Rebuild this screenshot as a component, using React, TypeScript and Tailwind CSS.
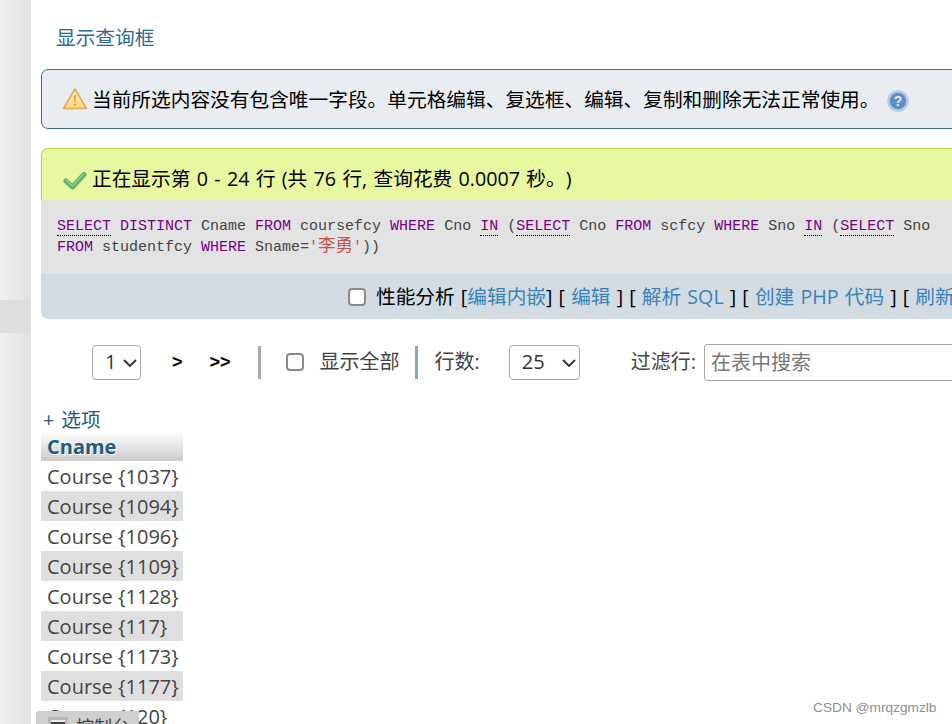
import React from 'react'

const sans = "font-['Open_Sans','Noto_Sans_CJK_SC',sans-serif]"

const rows = ['1037', '1094', '1096', '1109', '1128', '117', '1173', '1177', '120']

const Kw = ({ children, tip }: { children: React.ReactNode; tip?: boolean }) => (
  <span className={tip ? 'text-[#770088] border-b border-dotted border-black' : 'text-[#770088]'}>{children}</span>
)

const WarnIcon = () => (
  <svg width="26" height="24" viewBox="0 0 26 24" className="shrink-0">
    <defs>
      <linearGradient id="warn" x1="0" y1="0" x2="0" y2="1">
        <stop offset="0" stopColor="#fff6d0" />
        <stop offset="1" stopColor="#f7d774" />
      </linearGradient>
    </defs>
    <path d="M13 2 L24.5 21.5 H1.5 Z" fill="url(#warn)" stroke="#e5a95a" strokeWidth="1.6" strokeLinejoin="round" />
    <path d="M12 8 h2 l-.4 7 h-1.2 Z" fill="#d9a520" />
    <circle cx="13" cy="17.6" r="1.2" fill="#d9a520" />
  </svg>
)

const CheckIcon = () => (
  <svg width="24" height="20" viewBox="0 0 24 20" className="shrink-0">
    <path d="M3 11 L9.5 17 L21 4.5" fill="none" stroke="#5fb36a" strokeWidth="5" strokeLinejoin="round" strokeLinecap="round" />
    <path d="M3.5 10.5 L9.5 16 L20.5 4" fill="none" stroke="#8fd08f" strokeWidth="1.4" strokeLinecap="round" />
  </svg>
)

const HelpIcon = () => (
  <svg width="22" height="22" viewBox="0 0 22 22" className="block">
    <circle cx="11" cy="11" r="10.8" fill="#b4cbe6" />
    <circle cx="11" cy="11" r="8.2" fill="#5f8fc4" />
    <text x="11" y="15.8" textAnchor="middle" fontSize="14" fontWeight="700" fontFamily="Liberation Sans" fill="#dfeaf6">?</text>
  </svg>
)

const Check = () => (
  <input type="checkbox" className="block appearance-none w-[18px] h-[18px] shrink-0 bg-white border-2 border-[#8a8a8a] rounded-[4px]" />
)

const Link = ({ children }: { children: React.ReactNode }) => <span className="text-[#3a83b5]">{children}</span>

const Select = ({ value, width, pad }: { value: string; width: string; pad: string }) => (
  <div className={`relative h-[35px] ${width}`}>
    <select className={`appearance-none w-full h-full ${pad} bg-white border border-[#aaa] rounded-[4px] text-[#333]`}>
      <option>{value}</option>
    </select>
    <svg width="14" height="8" viewBox="0 0 14 8" className="absolute right-[4px] top-[14px]">
      <path d="M1 1 L7 7 L13 1" fill="none" stroke="#333" strokeWidth="1.9" />
    </svg>
  </div>
)

export default function App() {
  return (
    <div className={`relative flex w-[952px] h-[724px] overflow-hidden bg-white ${sans}`}>
      <div className="w-[31px] shrink-0 bg-gradient-to-r from-[#eef0f2] to-[#dfe1e3] pt-[300px]">
        <div className="h-[33px] bg-[#dedede]" />
      </div>

      <div className="flex-1 min-w-0 pl-[10px]">
        <div className="pt-[24px] pl-[15px] h-[69px] text-[19.7px] leading-[28px] text-[#2c6a94]">显示查询框</div>

        <div className="w-[1000px] h-[60px] flex items-center pl-[20px] bg-[#e9edf1] border border-[#3f6f86] rounded-[7px] text-[19.7px] text-black whitespace-nowrap">
          <WarnIcon />
          <span className="ml-[4px] pt-[1px]">当前所选内容没有包含唯一字段。单元格编辑、复选框、编辑、复制和删除无法正常使用。</span>
          <span className="ml-[7px] mt-[4px]"><HelpIcon /></span>
        </div>

        <div className="w-[1000px] mt-[19px] rounded-[7px] overflow-hidden">
          <div className="h-[52px] flex items-center pl-[21px] bg-[#e8f8a0] border border-b-0 border-[#a6d13f] rounded-t-[7px] text-[19.7px] text-black whitespace-nowrap">
            <span className="mt-[10px]"><CheckIcon /></span>
            <span className="ml-[5px] mt-[8px] [word-spacing:1.2px] [text-spacing-trim:space-all]">正在显示第 0 - 24 行 (共 76 行, 查询花费 0.0007 秒。)</span>
          </div>
          <div className="h-[74px] bg-[#e3e3e3] pt-[16px] pl-[16px] font-['Liberation_Mono','Noto_Sans_CJK_SC',monospace] text-[15px] leading-[21px] text-[#444] whitespace-nowrap">
            <div>
              <Kw tip>SELECT</Kw> <Kw>DISTINCT</Kw> Cname <Kw>FROM</Kw> coursefcy <Kw>WHERE</Kw> Cno <Kw tip>IN</Kw> (<Kw tip>SELECT</Kw> Cno <Kw>FROM</Kw> scfcy <Kw>WHERE</Kw> Sno <Kw tip>IN</Kw> (<Kw tip>SELECT</Kw> Sno
            </div>
            <div>
              <Kw>FROM</Kw> studentfcy <Kw>WHERE</Kw> Sname=<span className="text-[#c0574b]">'<span className="text-[17.5px] leading-none">李勇</span>'</span>))
            </div>
          </div>
          <div className="h-[45px] flex items-center pl-[307px] bg-[#d3dce3] text-[19.7px] text-black whitespace-nowrap">
            <Check />
            <span className="ml-[10px] [word-spacing:1px]">性能分析 [<Link>编辑内嵌</Link>] [ <Link>编辑</Link> ] [ <Link>解析 SQL</Link> ] [ <Link>创建 PHP 代码</Link> ] [ <Link>刷新</Link> ]</span>
          </div>
        </div>

        <div className="flex items-center w-[1000px] h-[38px] mt-[24px] pl-[51px] text-[20px] text-[#444] whitespace-nowrap">
          <Select value="1" width="w-[49px]" pad="pl-[12px]" />
          <span className="ml-[31px] font-bold text-black font-['Liberation_Sans',sans-serif] text-[18px]">&gt;</span>
          <span className="ml-[27px] font-bold text-black font-['Liberation_Sans',sans-serif] text-[18px]">&gt;&gt;</span>
          <span className="ml-[27px] w-[3px] h-[33px] bg-[#a3aab0]" />
          <span className="ml-[25px]"><Check /></span>
          <span className="ml-[16px]">显示全部</span>
          <span className="ml-[15px] w-[3px] h-[33px] bg-[#8aa5ba]" />
          <span className="ml-[17px]">行数:</span>
          <span className="ml-[29px]"><Select value="25" width="w-[71px]" pad="pl-[12px]" /></span>
          <span className="ml-[51px]">过滤行:</span>
          <input
            placeholder="在表中搜索"
            className="ml-[8px] w-[320px] h-[37px] pl-[6px] bg-white border border-[#aaa] rounded-[3px] placeholder:text-[#777]"
          />
        </div>

        <div className="mt-[25px] pl-[2px] h-[26px] text-[19.7px] leading-[27px] text-[#235a81] [word-spacing:2px]">+ 选项</div>

        <div className="w-[142px] text-[20px] text-[#444] whitespace-nowrap">
          <div className="h-[29px] pl-[6px] leading-[30px] font-bold text-[#235a81] bg-gradient-to-b from-white to-[#cccccc] [text-shadow:1px_1px_0_#fff]">Cname</div>
          {rows.map((r, i) => (
            <div key={r} className={i % 2 === 1 ? 'h-[30px] pl-[6px] leading-[32px] bg-[#dfdfdf]' : 'h-[30px] pl-[6px] leading-[32px]'}>
              Course {'{' + r + '}'}
            </div>
          ))}
        </div>
      </div>

      <div className="absolute left-[36px] top-[711px] w-[103px] h-[20px] flex items-start pl-[12px] pt-[6px] bg-[#cfcfcf] rounded-t-[3px] text-[18px] leading-[20px] text-[#444] gap-[8px]">
        <span className="w-[20px] h-[14px] border-[3px] border-[#b8b8b8] bg-[#eee]">
          <span className="block h-[3px] mt-[2px] bg-[#444]" />
        </span>
        <span>控制台</span>
      </div>

      <div className="absolute left-[813px] top-[698px] font-['Liberation_Sans',sans-serif] text-[13.7px] text-[#8f8f8f]">CSDN @mrqzgmzlb</div>
    </div>
  )
}
